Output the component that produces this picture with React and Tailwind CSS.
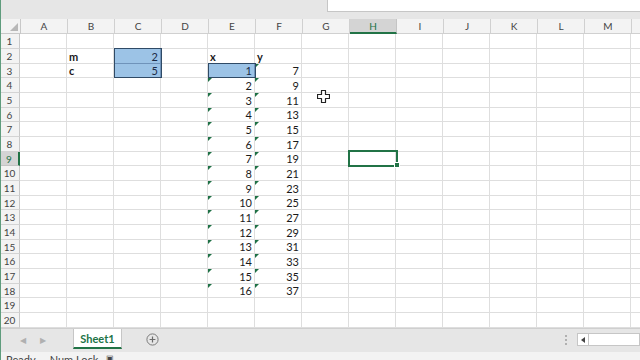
import React from "react";

const COLS = ["A", "B", "C", "D", "E", "F", "G", "H", "I", "J", "K", "L", "M"];
const ROWS = Array.from({ length: 20 }, (_, i) => i + 1);

function cellData(r, c) {
  if (r === 2) {
    if (c === "B") return { t: "m", bold: true };
    if (c === "C") return { t: "2", right: true, sel: true };
    if (c === "E") return { t: "x", bold: true };
    if (c === "F") return { t: "y", bold: true };
  }
  if (r === 3) {
    if (c === "B") return { t: "c", bold: true };
    if (c === "C") return { t: "5", right: true, sel: true };
  }
  if (r >= 3 && r <= 18) {
    const x = r - 2;
    if (c === "E") return { t: String(x), right: true, sel: r === 3, tri: r >= 4 };
    if (c === "F") return { t: String(2 * x + 5), right: true, tri: true };
  }
  return null;
}

function Tri() {
  return (
    <svg className="absolute left-0 top-0" width="4" height="4" viewBox="0 0 4 4">
      <polygon points="0,0 4,0 0,4" fill="#1e7145" />
    </svg>
  );
}

function Cell({ r, c }) {
  const d = cellData(r, c);
  return (
    <div
      className={
        "relative w-[47px] shrink-0 border-r border-b flex items-center px-[2px] overflow-visible " +
        (d && d.sel ? "bg-[#9cc3e6] border-[#6f93ba] " : "border-[#dedede] ") +
        (d && d.right ? "justify-end" : "justify-start")
      }
    >
      {d && d.tri ? <Tri /> : null}
      {d ? (
        <span className={"text-[11px] leading-none " + (d.sel ? "text-[#1b2a44] " : "text-[#1a1a1a] ") + (d.bold ? "font-bold" : "font-normal")}>{d.t}</span>
      ) : null}
    </div>
  );
}

function Row({ r }) {
  const h = r % 3 === 0 ? "h-[14px]" : "h-[15px]";
  const active = r === 9;
  return (
    <div className={"flex " + h}>
      <div
        className={
          "w-[20px] shrink-0 border-b flex items-center justify-center text-[10px] leading-none " +
          (active
            ? "bg-[#d4d4d4] border-b-[#c4c4c4] border-r-2 border-r-[#217346] text-[#217346]"
            : "bg-[#f3f3f3] border-b-[#d4d4d4] border-r border-r-[#c8c8c8] text-[#444]")
        }
      >
        {r}
      </div>
      {COLS.map((c) => (
        <Cell key={c} r={r} c={c} />
      ))}
      <div className="flex-1 border-b border-[#dedede]" />
    </div>
  );
}

export default function App() {
  return (
    <div className="relative w-[640px] h-[360px] overflow-hidden bg-white font-['Lato','Liberation_Sans',sans-serif] border-l border-l-[#5f9c7d] flex flex-col">
      {/* top strip with formula box */}
      <div className="h-[19px] shrink-0 bg-[#e6e6e6] flex">
        <div className="w-[326px]" />
        <div className="flex-1 h-[12px] bg-white border-l border-b border-[#c6c6c6]" />
      </div>

      {/* column headers */}
      <div className="h-[15px] shrink-0 flex bg-[#f3f3f3] ml-[-1px]">
        <div className="relative w-[21px] shrink-0 border-r border-b border-[#c8c8c8]">
          <svg className="absolute right-[2px] bottom-[2px]" width="8" height="8" viewBox="0 0 8 8">
            <polygon points="8,0 8,8 0,8" fill="#b8b8b8" />
          </svg>
        </div>
        {COLS.map((c) =>
          c === "H" ? (
            <div
              key={c}
              className="w-[47px] shrink-0 bg-[#d4d4d4] border-r border-r-[#c4c4c4] border-b-2 border-b-[#217346] flex items-center justify-center text-[10px] leading-none text-[#217346]"
            >
              {c}
            </div>
          ) : (
            <div
              key={c}
              className="w-[47px] shrink-0 border-r border-b border-[#d0d0d0] flex items-center justify-center text-[10px] leading-none text-[#444]"
            >
              {c}
            </div>
          )
        )}
        <div className="flex-1 border-b border-[#d0d0d0]" />
      </div>

      {/* grid rows */}
      <div className="flex flex-col shrink-0 ml-[-1px]">
        {ROWS.map((r) => (
          <Row key={r} r={r} />
        ))}
      </div>

      {/* sheet tab bar */}
      <div className="h-[24px] shrink-0 bg-[#e6e6e6] border-t border-[#cfcfcf] flex items-start">
        <div className="w-[72px] h-[21px] flex items-center text-[8px] text-[#b0b0b0]">
          <span className="ml-[19px]">◀</span>
          <span className="ml-[14px]">▶</span>
        </div>
        <div className="w-[49px] h-[20px] bg-white border-x border-[#c6c6c6] border-b-2 border-b-[#217346] flex items-center justify-center text-[11px] font-bold text-[#217346] leading-none">
          Sheet1
        </div>
        <div className="ml-[24px] h-[21px] flex items-center">
          <svg width="13" height="13" viewBox="0 0 13 13">
            <circle cx="6.5" cy="6.5" r="5.6" fill="none" stroke="#7a7a7a" strokeWidth="1" />
            <path d="M6.5 3.6v5.8M3.6 6.5h5.8" stroke="#6a6a6a" strokeWidth="1.2" />
          </svg>
        </div>
        <div className="flex-1" />
        <div className="h-[21px] flex flex-col items-center justify-center gap-[2px] mr-[10px]">
          <div className="w-[2px] h-[2px] bg-[#b0b0b0]" />
          <div className="w-[2px] h-[2px] bg-[#b0b0b0]" />
          <div className="w-[2px] h-[2px] bg-[#b0b0b0]" />
        </div>
        <div className="w-[63px] h-[13px] mt-[4px] bg-white border border-[#c6c6c6] flex items-center">
          <div className="w-[11px] h-full border-r border-[#c6c6c6] flex items-center justify-center">
            <svg width="4" height="6" viewBox="0 0 4 6">
              <polygon points="4,0 4,6 0,3" fill="#444" />
            </svg>
          </div>
        </div>
      </div>

      {/* status bar */}
      <div className="flex-1 bg-[#f3f3f3] overflow-hidden flex items-start text-[11px] leading-none text-[#444] pt-[2px]">
        <span className="ml-[5px]">Ready</span>
        <span className="ml-[14px]">Num Lock</span>
        <span className="ml-[8px] text-[8px]">▣</span>
      </div>

      {/* selection outlines */}
      <div className="absolute left-[113px] top-[48px] w-[48px] h-[30px] border border-[#2f4a66] pointer-events-none" />
      <div className="absolute left-[207px] top-[63px] w-[48px] h-[15px] border border-[#2f4a66] pointer-events-none" />
      <div className="absolute left-[347px] top-[150px] w-[50px] h-[17px] border-2 border-[#217346] pointer-events-none" />
      <div className="absolute left-[393px] top-[162px] w-[6px] h-[6px] bg-[#217346] border border-white pointer-events-none" />

      {/* mouse cursor */}
      <svg className="absolute left-[316px] top-[90px]" width="13" height="13" viewBox="0 0 13 13">
        <path
          d="M4.5 0.5h4v4h4v4h-4v4h-4v-4h-4v-4h4z"
          fill="#ffffff"
          stroke="#222"
          strokeWidth="1.2"
          strokeLinejoin="round"
        />
      </svg>
    </div>
  );
}
